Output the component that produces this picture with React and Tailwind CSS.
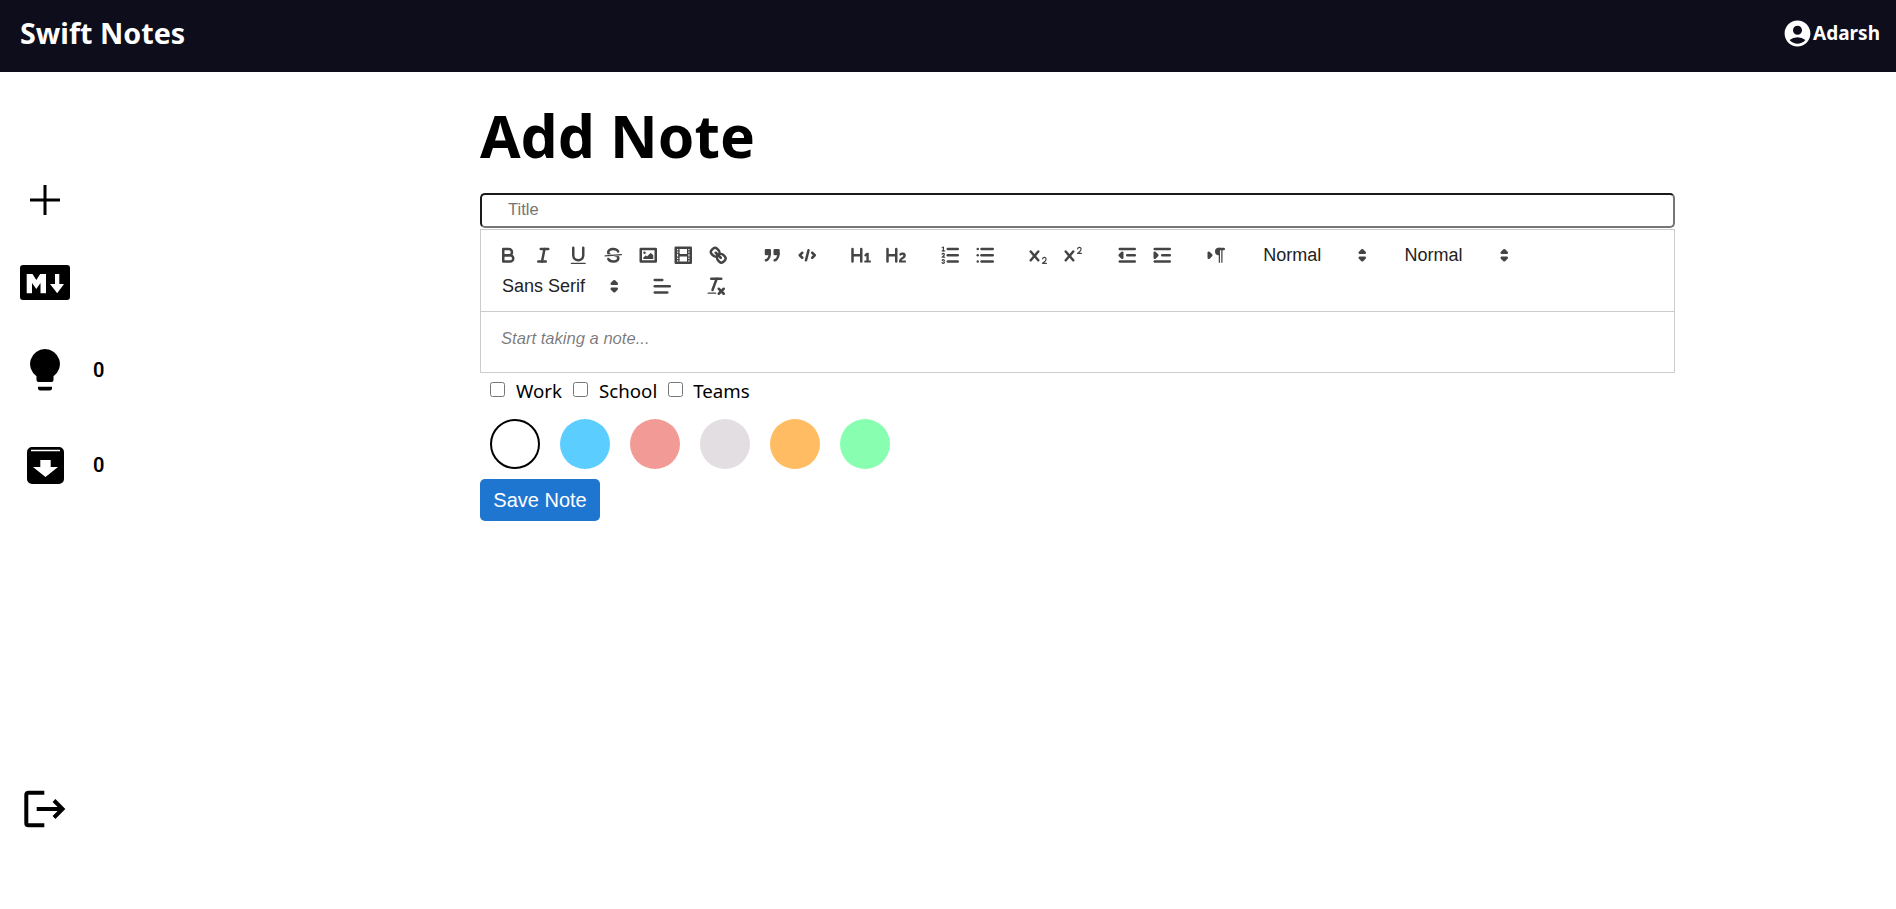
import { MdAccountCircle } from 'react-icons/md';

// Quill snow toolbar icons, viewBox 18x18, drawn at 125%
const S = ({ children }) => (
  <svg viewBox="0 0 18 18" className="w-[22.5px] h-[22.5px] fill-none stroke-[#444] [stroke-width:2] [stroke-linecap:round] [stroke-linejoin:round]">
    {children}
  </svg>
);
const F = (props) => <path className="fill-[#444] stroke-none" {...props} />;
const R = (props) => <rect className="fill-[#444] stroke-none" {...props} />;
const Thin = (props) => <path className="[stroke-width:1]" {...props} />;

const X_PATH = 'M9.65,5.241a1,1,0,0,0-1.409.108L6,7.964,3.759,5.349A1,1,0,0,0,2.192,6.59178Q2.21541,6.6213,2.241,6.649L4.684,9.5,2.241,12.35A1,1,0,0,0,3.71,13.70722q0.02557-.02768.049-0.05722L6,11.036,8.241,13.65a1,1,0,1,0,1.567-1.24277Q9.78459,12.3777,9.759,12.35L7.316,9.5,9.759,6.651A1,1,0,0,0,9.65,5.241Z';

const ICONS = {
  bold: <><path d="M5,4H9.5A2.5,2.5,0,0,1,12,6.5v0A2.5,2.5,0,0,1,9.5,9H5A0,0,0,0,1,5,9V4A0,0,0,0,1,5,4Z" /><path d="M5,9h5.5A2.5,2.5,0,0,1,13,11.5v0A2.5,2.5,0,0,1,10.5,14H5a0,0,0,0,1,0,0V9A0,0,0,0,1,5,9Z" /></>,
  italic: <><line x1="7" x2="13" y1="4" y2="4" /><line x1="5" x2="11" y1="14" y2="14" /><line x1="8" x2="10" y1="14" y2="4" /></>,
  underline: <><path d="M5,3V9a4.012,4.012,0,0,0,4,4H9a4.012,4.012,0,0,0,4-4V3" /><R height="1" rx=".5" ry=".5" width="12" x="3" y="15" /></>,
  strike: <><Thin d="M15.5,8.5 L2.5,9.5" /><F d="M9.007,8C6.542,7.791,6,7.519,6,6.5,6,5.792,7.283,5,9,5c1.571,0,2.765.679,2.969,1.309a1,1,0,0,0,1.9-.617C13.356,4.106,11.354,3,9,3,6.2,3,4,4.538,4,6.5a3.2,3.2,0,0,0,.5,1.843Z" /><F d="M8.984,10C11.457,10.208,12,10.479,12,11.5c0,.708-1.283,1.5-3,1.5-1.571,0-2.765-.679-2.969-1.309a1,1,0,1,0-1.9.617C4.644,13.894,6.646,15,9,15c2.8,0,5-1.538,5-3.5a3.2,3.2,0,0,0-.5-1.843Z" /></>,
  image: <><rect height="10" width="12" x="3" y="4" /><circle className="fill-[#444] stroke-none" cx="6" cy="7" r="1" /><polyline className="fill-[#444] stroke-none" points="5 12 5 11 7 9 8 10 11 7 13 9 13 12 5 12" /></>,
  video: <><rect height="12" width="12" x="3" y="3" /><R height="12" width="1" x="5" y="3" /><R height="12" width="1" x="12" y="3" /><R height="2" width="8" x="5" y="8" /><R height="1" width="3" x="3" y="5" /><R height="1" width="3" x="3" y="7" /><R height="1" width="3" x="3" y="10" /><R height="1" width="3" x="3" y="12" /><R height="1" width="3" x="12" y="5" /><R height="1" width="3" x="12" y="7" /><R height="1" width="3" x="12" y="10" /><R height="1" width="3" x="12" y="12" /></>,
  link: <><line x1="7" x2="11" y1="7" y2="11" /><path d="M8.9,4.577a3.476,3.476,0,0,1,.36,4.679A3.476,3.476,0,0,1,4.577,8.9C3.185,7.5,2.035,6.4,4.217,4.217S7.5,3.185,8.9,4.577Z" /><path d="M13.423,9.1a3.476,3.476,0,0,0-4.679-.36,3.476,3.476,0,0,0,.36,4.679c1.392,1.392,2.5,2.542,4.679.36S14.815,10.5,13.423,9.1Z" /></>,
  quote: <><rect className="fill-[#444]" height="3" width="3" x="4" y="5" /><rect className="fill-[#444]" height="3" width="3" x="11" y="5" /><path d="M7,8c0,4.031-3,5-3,5" /><path d="M14,8c0,4.031-3,5-3,5" /></>,
  code: <><polyline points="5 7 3 9 5 11" /><polyline points="13 7 15 9 13 11" /><line x1="10" x2="8" y1="5" y2="13" /></>,
  h1: <F d="M10,4V14a1,1,0,0,1-2,0V10H3v4a1,1,0,0,1-2,0V4A1,1,0,0,1,3,4V8H8V4a1,1,0,0,1,2,0Zm6.06787,9.209H14.98975V7.59863a.54085.54085,0,0,0-.605-.60547h-.62744a1.01119,1.01119,0,0,0-.748.29688L11.645,8.56641a.5435.5435,0,0,0-.022.8584l.28613.30762a.53861.53861,0,0,0,.84717.0332l.09912-.08789a1.2137,1.2137,0,0,0,.2417-.35254h.02246s-.01123.30859-.01123.60547V13.209H12.041a.54085.54085,0,0,0-.605.60547v.43945a.54085.54085,0,0,0,.605.60547h4.02686a.54085.54085,0,0,0,.605-.60547v-.43945A.54085.54085,0,0,0,16.06787,13.209Z" />,
  h2: <F d="M16.73975,13.81445v.43945a.54085.54085,0,0,1-.605.60547H11.855a.58392.58392,0,0,1-.64893-.60547V14.0127c0-2.90527,3.39941-3.42187,3.39941-4.55469a.77675.77675,0,0,0-.84717-.78125,1.17684,1.17684,0,0,0-.83594.38477c-.2749.26367-.561.374-.85791.13184l-.4292-.34082c-.30811-.24219-.38525-.51758-.1543-.81445a2.97155,2.97155,0,0,1,2.45361-1.17676,2.45393,2.45393,0,0,1,2.68408,2.40918c0,2.45312-3.1792,2.92676-3.27832,3.93848h2.79443A.54085.54085,0,0,1,16.73975,13.81445ZM9,3A.99974.99974,0,0,0,8,4V8H3V4A1,1,0,0,0,1,4V14a1,1,0,0,0,2,0V10H8v4a1,1,0,0,0,2,0V4A.99974.99974,0,0,0,9,3Z" />,
  ordered: <><line x1="7" x2="15" y1="4" y2="4" /><line x1="7" x2="15" y1="9" y2="9" /><line x1="7" x2="15" y1="14" y2="14" /><Thin d="M2.5,5.5 H4.5" /><F d="M3.5,6A0.5,0.5,0,0,1,3,5.5V3.085l-0.276.138A0.5,0.5,0,0,1,2.053,3c-0.124-.247-0.023-0.324.224-0.447l1-.5A0.5,0.5,0,0,1,4,2.5v3A0.5,0.5,0,0,1,3.5,6Z" /><Thin d="M4.5,10.5h-2c0-.234,1.85-1.076,1.85-2.234A0.959,0.959,0,0,0,2.5,8.156" /><Thin d="M2.5,14.846a0.959,0.959,0,0,0,1.85-.109A0.7,0.7,0,0,0,3.75,14a0.688,0.688,0,0,0,.6-0.736,0.959,0.959,0,0,0-1.85-.109" /></>,
  bullet: <><line x1="6" x2="15" y1="4" y2="4" /><line x1="6" x2="15" y1="9" y2="9" /><line x1="6" x2="15" y1="14" y2="14" /><line x1="3" x2="3" y1="4" y2="4" /><line x1="3" x2="3" y1="9" y2="9" /><line x1="3" x2="3" y1="14" y2="14" /></>,
  sub: <><F d="M15.5,15H13.861a3.858,3.858,0,0,0,1.914-2.975,1.8,1.8,0,0,0-1.6-1.751A1.921,1.921,0,0,0,12.021,11.7a0.50013,0.50013,0,1,0,.957.291h0a0.914,0.914,0,0,1,1.053-.725,0.81,0.81,0,0,1,.744.762c0,1.076-1.16971,1.86982-1.93971,2.43082A1.45639,1.45639,0,0,0,12,15.5a0.5,0.5,0,0,0,.5.5h3A0.5,0.5,0,0,0,15.5,15Z" /><F d={X_PATH} /></>,
  sup: <><F d="M15.5,7H13.861a4.015,4.015,0,0,0,1.914-2.975,1.8,1.8,0,0,0-1.6-1.751A1.922,1.922,0,0,0,12.021,3.7a0.5,0.5,0,1,0,.957.291,0.917,0.917,0,0,1,1.053-.725,0.81,0.81,0,0,1,.744.762c0,1.077-1.164,1.925-1.934,2.486A1.423,1.423,0,0,0,12,7.5a0.5,0.5,0,0,0,.5.5h3A0.5,0.5,0,0,0,15.5,7Z" /><F d={X_PATH} /></>,
  outdent: <><line x1="3" x2="15" y1="14" y2="14" /><line x1="3" x2="15" y1="4" y2="4" /><line x1="9" x2="15" y1="9" y2="9" /><polyline className="fill-[#444]" points="5 7 5 11 3 9 5 7" /></>,
  indent: <><line x1="3" x2="15" y1="14" y2="14" /><line x1="3" x2="15" y1="4" y2="4" /><line x1="9" x2="15" y1="9" y2="9" /><polyline className="fill-[#444]" points="3 7 3 11 5 9 3 7" /></>,
  direction: <><polygon className="fill-[#444]" points="3 11 5 9 3 7 3 11" /><line x1="15" x2="11" y1="4" y2="4" /><F d="M11,3a3,3,0,0,0,0,6h1V3H11Z" /><R height="11" width="1" x="11" y="4" /><R height="11" width="1" x="13" y="4" /></>,
  align: <><line x1="3" x2="15" y1="9" y2="9" /><line x1="3" x2="13" y1="14" y2="14" /><line x1="3" x2="9" y1="4" y2="4" /></>,
  clean: <><line x1="5" x2="13" y1="3" y2="3" /><line x1="6" x2="9.35" y1="12" y2="3" /><line x1="11" x2="15" y1="11" y2="15" /><line x1="15" x2="11" y1="11" y2="15" /><R height="1" rx=".5" ry=".5" width="7" x="2" y="14" /></>,
};

const ToolButton = ({ icon }) => (
  <button type="button" className="w-[35px] h-[30px] shrink-0 flex items-center justify-center">
    <S>{ICONS[icon]}</S>
  </button>
);

// one ql-formats span: buttons with 15px (x1.25) right margin
const Group = ({ icons }) => (
  <span className="flex mr-[18.75px]">
    {icons.map((i) => <ToolButton key={i} icon={i} />)}
  </span>
);

const Picker = ({ label, width }) => (
  <span className={`${width} h-[30px] mr-[18.75px] shrink-0 flex items-center justify-between pl-[11px] pr-[1px] text-[18px] text-[#222]`}>
    <span>{label}</span>
    <svg viewBox="0 0 18 18" className="w-[22.5px] h-[22.5px]">
      <polygon points="7 11 9 13 11 11 7 11" fill="#444" stroke="#444" strokeWidth="2" strokeLinejoin="round" />
      <polygon points="7 7 9 5 11 7 7 7" fill="#444" stroke="#444" strokeWidth="2" strokeLinejoin="round" />
    </svg>
  </span>
);

const SWATCHES = ['bg-[#5bcdff]', 'bg-[#f29b96]', 'bg-[#e3dee2]', 'bg-[#ffbc62]', 'bg-[#88ffb0]'];

function Sidebar() {
  return (
    <aside className="w-[480px] shrink-0 flex flex-col pl-5 font-['Roboto',sans-serif] text-black">
      {/* add */}
      <div className="w-[50px] h-[30px] mt-[113px] flex justify-center items-center">
        <svg viewBox="0 0 30 30" className="w-[30px] h-[30px]" stroke="currentColor" strokeWidth="3">
          <path d="M15 0v30M0 15h30" />
        </svg>
      </div>
      {/* markdown */}
      <div className="w-[50px] h-[35px] mt-[50px]">
        <svg viewBox="0 0 50 35" className="w-[50px] h-[35px]">
          <path
            fillRule="evenodd"
            d="M3 0h44a3 3 0 0 1 3 3v29a3 3 0 0 1-3 3H3a3 3 0 0 1-3-3V3a3 3 0 0 1 3-3zM6.7 9v19.3H12V18l4.3 6 4.2-6v10.3H26V9h-5.8l-3.9 6-3.8-6zM35 9v10h-5l7.2 9.3L44 19h-4.7V9z"
          />
        </svg>
      </div>
      {/* notes count */}
      <div className="h-[42px] mt-[49px] flex items-center">
        <div className="w-[50px] flex justify-center">
          <svg viewBox="0 0 30 42" className="w-[30px] h-[42px]">
            <path d="M15 0a15 15 0 0 0-8.5 27.3V31a2 2 0 0 0 2 2h13a2 2 0 0 0 2-2v-3.700A15 15 0 0 0 15 0z" />
            <path d="M8 37.700h14v1.300a2.500 2.500 0 0 1-2.500 2.500h-9A2.500 2.500 0 0 1 8 39z" />
          </svg>
        </div>
        <span className="ml-[23px] text-[20px] font-semibold">0</span>
      </div>
      {/* archive count */}
      <div className="h-[38px] mt-[55px] flex items-center">
        <div className="w-[50px] flex justify-center">
          <svg viewBox="0 0 37 37" className="w-[37px] h-[37px]">
            <path
              fillRule="evenodd"
              d="M5 0h27a5 5 0 0 1 5 5v27a5 5 0 0 1-5 5H5a5 5 0 0 1-5-5V5a5 5 0 0 1 5-5zM4 2.800v1.500h29V2.800zM13.300 13v7H6l12.500 10L31 20h-7.300v-7z"
            />
          </svg>
        </div>
        <span className="ml-[23px] text-[20px] font-semibold">0</span>
      </div>
      {/* logout */}
      <div className="w-[50px] h-[40px] mt-[305px] pl-[2px]">
        <svg viewBox="0 0 44 40" className="w-[44px] h-[40px]" fill="none" stroke="currentColor" strokeWidth="4">
          <path d="M22.300 3.700H6.300a2 2 0 0 0-2 2v28.600a2 2 0 0 0 2 2h16" />
          <path d="M14.700 20h26M32 11.500l8.500 8.500-8.500 8.500" />
        </svg>
      </div>
    </aside>
  );
}

export default function App() {
  return (
    <div className="h-[909px] bg-white flex flex-col overflow-hidden font-['Noto_Sans',sans-serif] text-black">
      <nav className="h-[72px] shrink-0 bg-[#0d0d1c] text-white flex items-center justify-between pl-5 pr-[16px] pb-[6px]">
        <span className="text-[28.7px] font-bold">Swift Notes</span>
        <span className="flex items-center text-[19px] font-bold">
          <MdAccountCircle className="w-[31px] h-[31px]" />
          Adarsh
        </span>
      </nav>

      <div className="flex flex-1">
        <Sidebar />
        <main className="w-[1195px] shrink-0">
          <h1 className="text-[58.7px] font-bold leading-[82px] mt-[21.5px]">Add Note</h1>

          <input
            placeholder="Title"
            className="block w-full h-[35px] mt-[17.5px] pl-[26px] pb-[2px] rounded-[5px] border-2 border-[#1a1a1a] border-b-[#767676] border-r-[#767676] text-[16.5px] font-['Liberation_Sans',sans-serif] placeholder:text-[#757575] outline-none"
          />

          <div className="mt-[1px] border border-[#ccc] font-['Liberation_Sans',sans-serif]">
            <div className="p-[10px] flex flex-wrap">
              <Group icons={['bold', 'italic', 'underline', 'strike', 'image', 'video', 'link']} />
              <Group icons={['quote', 'code']} />
              <Group icons={['h1', 'h2']} />
              <Group icons={['ordered', 'bullet']} />
              <Group icons={['sub', 'sup']} />
              <Group icons={['outdent', 'indent']} />
              <Group icons={['direction']} />
              <Picker label="Normal" width="w-[122.5px]" />
              <Picker label="Normal" width="w-[122.5px]" />
              <span className="basis-full h-px" />
              <Picker label="Sans Serif" width="w-[135px]" />
              <Group icons={['align']} />
              <Group icons={['clean']} />
            </div>
            <div className="border-t border-[#ccc] h-[61px] pl-[20px] py-[15px] text-[16.6px] leading-[23px] italic text-[#0008]">
              Start taking a note...
            </div>
          </div>

          <div className="flex items-center h-[37px] pl-[10px] text-[18.7px]">
            <input type="checkbox" className="w-[15px] h-[15px] -mt-[4px]" />
            <span className="ml-[11px] mr-[11px]">Work</span>
            <input type="checkbox" className="w-[15px] h-[15px] -mt-[4px]" />
            <span className="ml-[11px] mr-[11px]">School</span>
            <input type="checkbox" className="w-[15px] h-[15px] -mt-[4px]" />
            <span className="ml-[10px]">Teams</span>
          </div>

          <div className="flex gap-5 pl-[10px] mt-[9px]">
            <button type="button" className="w-[50px] h-[50px] rounded-full bg-white border-[2.5px] border-black" />
            {SWATCHES.map((c) => (
              <button key={c} type="button" className={`w-[50px] h-[50px] rounded-full ${c}`} />
            ))}
          </div>

          <button type="button" className="block mt-[10px] w-[120px] h-[42px] rounded-[5px] bg-[#1f76d0] text-white text-[20px] font-['Liberation_Sans',sans-serif]">
            Save Note
          </button>
        </main>
      </div>
    </div>
  );
}
